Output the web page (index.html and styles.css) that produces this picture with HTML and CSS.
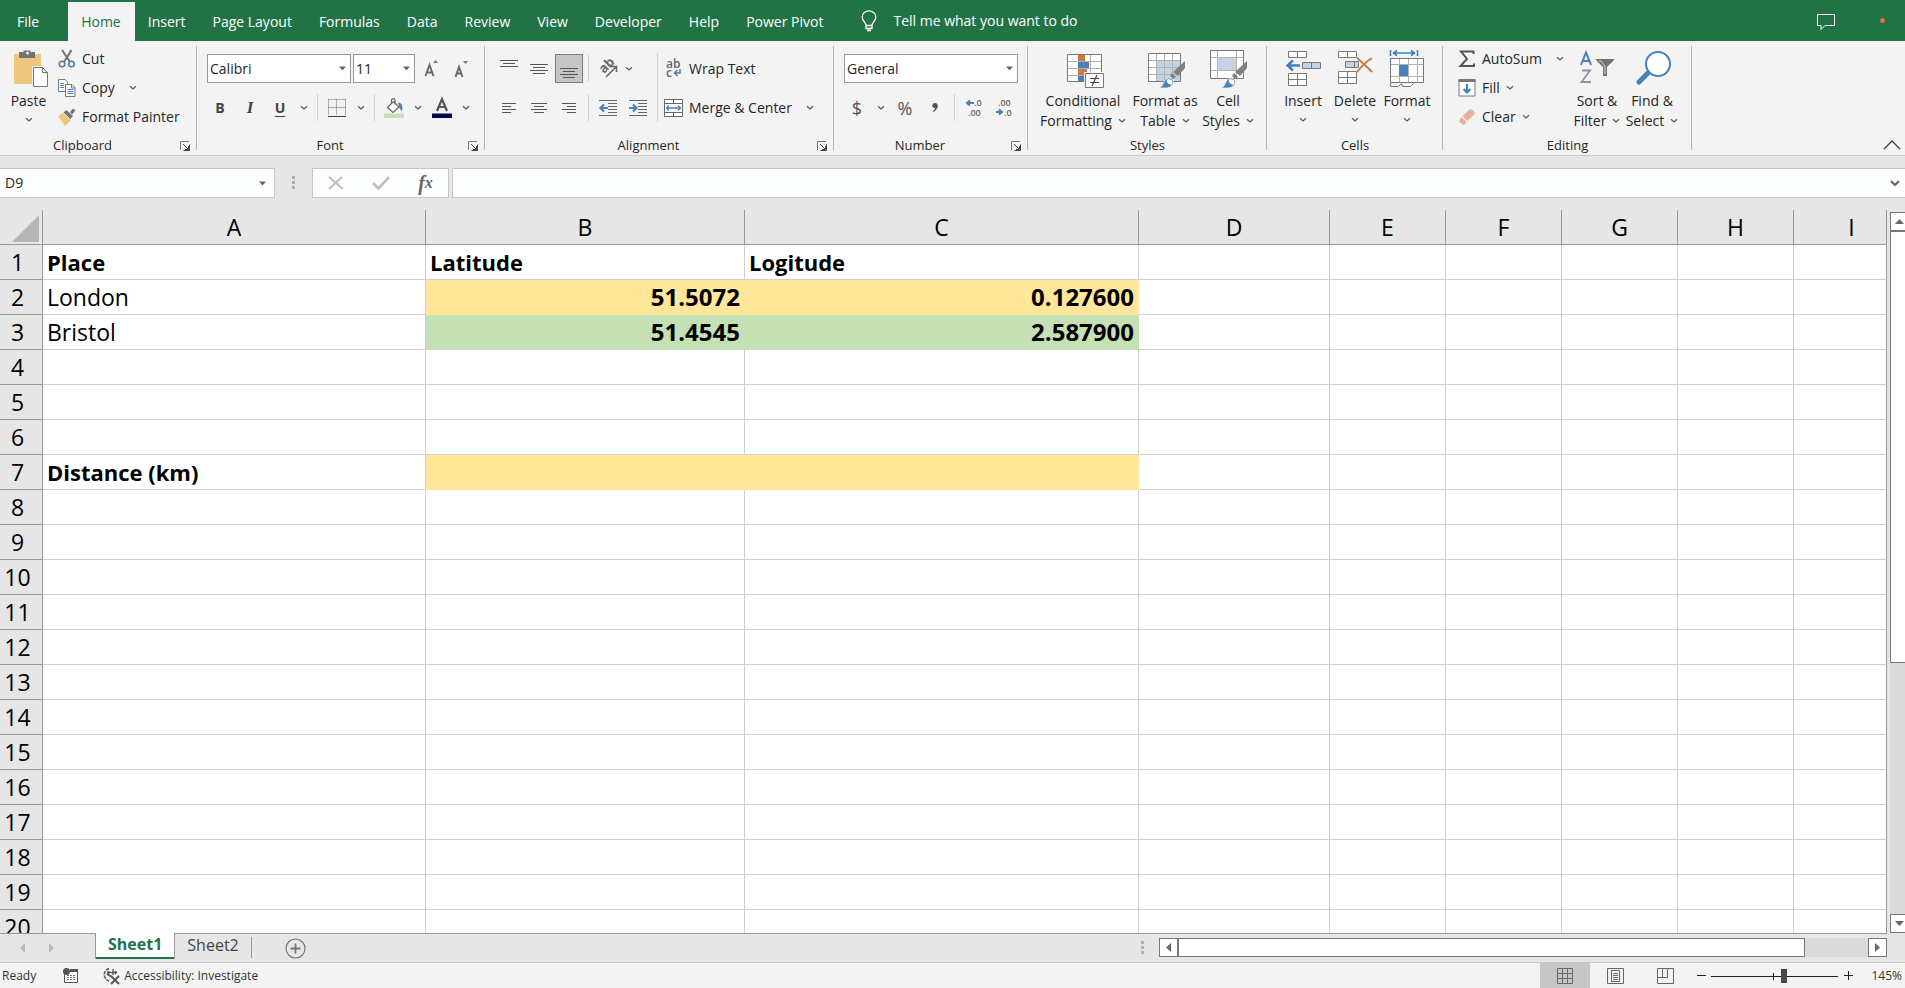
FILE: index.html
```html
<!DOCTYPE html>
<html lang="en">
<head>
<meta charset="utf-8">
<title>Spreadsheet</title>
<link rel="stylesheet" href="styles.css">
</head>
<body>
<svg class="defs" aria-hidden="true">
  <symbol id="chev" viewBox="0 0 8 6"><path d="M1 1.200 4 4 7 1.200" fill="none" stroke="#555" stroke-width="1.200"/></symbol>
  <symbol id="tri" viewBox="0 0 8 5"><path d="M0 .5h7L3.500 4.500z" fill="#666"/></symbol>
  <symbol id="launch" viewBox="0 0 10 10"><path d="M.5 9V.5H9" fill="none" stroke="#777"/><path d="M3 3 8 8M9.500 3.500v6h-6M8.500 5v3.500H5" fill="none" stroke="#444"/></symbol>
  <symbol id="brush" viewBox="0 0 28 28"><path d="M27 0v7l-7 8-5-4z" fill="#7f7f7f"/><path d="m14 12 4 4-3 2-3-3z" fill="#7f7f7f"/><path d="M1 27c5-1 4-10 10-10 5 0 6 6 1 9-3 1.500-7 1-11 1z" fill="#4681b8" stroke="#f3f3f3" stroke-width=".8"/><path d="M10 18c4 0 6 3 3 6-1-1-3-1-4-3-.6-1 0-2.500 1-3z" fill="#fff"/></symbol>
</svg>

<nav class="tabs">
  <button class="tab file">File</button>
  <button class="tab active">Home</button>
  <button class="tab">Insert</button>
  <button class="tab">Page Layout</button>
  <button class="tab">Formulas</button>
  <button class="tab">Data</button>
  <button class="tab">Review</button>
  <button class="tab">View</button>
  <button class="tab">Developer</button>
  <button class="tab">Help</button>
  <button class="tab">Power Pivot</button>
  <button class="tell">
    <svg width="16" height="22" viewBox="0 0 16 22" fill="none" stroke="#fff" stroke-width="1.3"><path d="M5 15.500c0-3-3.800-4.500-3.800-8.500a6.800 6.200 0 0 1 13.600 0c0 4-3.800 5.500-3.800 8.500zM5 15.500v3h6v-3M6 20.500h4"/></svg>
    <span>Tell me what you want to do</span>
  </button>
  <button class="comment" aria-label="Comments"><svg width="18" height="18" viewBox="0 0 18 18"><path d="M.5 1.500h17v11H8l-4 4v-4H.5z" fill="none" stroke="#fff"/></svg></button>
  <span class="dot"></span>
</nav>

<section class="ribbon">
  <div class="group clipboard">
    <div class="content">
      <button class="big paste">
        <svg width="40" height="40" viewBox="-4 0 40 40"><path d="M1 5h27v30H1z" fill="#ecc77d"/><path d="M6 3h4.500V1.500h7V3H22v6H6z" fill="#737373"/><circle cx="14.500" cy="4" r="1.500" fill="#f3f3f3"/><path d="M19 17h11l6 6v17H19z" fill="#f3f3f3"/><path d="M20.500 18.500h9l5 5v14h-14zM29.500 18.500v5h5" fill="#fff" stroke="#777"/></svg>
        <span>Paste</span><svg class="chev"><use href="#chev"/></svg>
      </button>
      <div class="stack">
        <button class="small"><svg width="18" height="18" viewBox="0 0 18 18" fill="none"><path d="m4 0 8 12M13.500 0 6 12" stroke="#737373" stroke-width="2"/><circle cx="4" cy="14" r="2.800" stroke="#4681b8" stroke-width="1.500"/><circle cx="13.500" cy="14" r="2.800" stroke="#4681b8" stroke-width="1.500"/></svg><span>Cut</span></button>
        <button class="small"><svg width="18" height="18" viewBox="0 0 18 18" fill="#fff" stroke="#777"><path d="M.5.500H7l2.500 2.500v9.500h-9z"/><path d="M2 4.500h4M2 6.500h4M2 8.500h4" stroke="#4681b8"/><path d="M7.500 5.500H14l3 3v9H7.500zM13.500 5.500v3.500H17"/><path d="M9.500 10.500h6M9.500 12.500h6M9.500 14.500h6" stroke="#4681b8"/></svg><span>Copy</span><svg class="chev far"><use href="#chev"/></svg></button>
        <button class="small"><svg width="18" height="18" viewBox="0 0 18 18"><path d="m0 8 5-3 8 7-6 6z" fill="#ecc77d"/><path d="m5.500 4.500 3-2.500 6.500 6-2.500 3z" fill="#737373"/><path d="m12 4 3-3.500 2.500 2L14 6.500z" fill="#737373"/></svg><span>Format Painter</span></button>
      </div>
    </div>
    <div class="caption"><span>Clipboard</span><button aria-label="Clipboard settings"><svg width="10" height="10"><use href="#launch"/></svg></button></div>
  </div>

  <div class="group font">
    <div class="content rows">
      <div class="row">
        <div class="pick face"><select aria-label="Font"><option>Calibri</option></select><svg class="tri"><use href="#tri"/></svg></div>
        <div class="pick size"><select aria-label="Font size"><option>11</option></select><svg class="tri"><use href="#tri"/></svg></div>
        <button class="tool lead" aria-label="Increase font size"><svg width="15" height="18" viewBox="0 0 15 18"><path d="m1.500 16 4-11 4 11M3 12.500h5.500" fill="none" stroke="#666" stroke-width="1.900"/><path d="m9 3 2.500-3L14 3z" fill="#4681b8"/></svg></button>
        <button class="tool" aria-label="Decrease font size"><svg width="15" height="18" viewBox="0 0 15 18"><path d="m1.500 17 3.500-10 3.500 10M3 13.500h4.500" fill="none" stroke="#666" stroke-width="1.900"/><path d="m9 1 2.500 3L14 1z" fill="#4681b8"/></svg></button>
      </div>
      <div class="row">
        <button class="tool strong">B</button><button class="tool slant">I</button><button class="tool under">U</button>
        <button class="drop" aria-label="Underline styles"><svg class="chev"><use href="#chev"/></svg></button>
        <span class="sep"></span>
        <button class="tool" aria-label="Borders"><svg width="18" height="18" viewBox="0 0 18 18" fill="none" stroke="#666"><path d="M.5.500v16M17.500.500v16M8.500.500v16M.5.500h17M.5 8.500h17" stroke-dasharray="1 1"/><path d="M0 17.500h18" stroke="#444"/></svg></button>
        <button class="drop" aria-label="Border styles"><svg class="chev"><use href="#chev"/></svg></button>
        <span class="sep"></span>
        <button class="tool" aria-label="Fill color"><svg width="20" height="22" viewBox="0 0 20 22"><path d="M0 16.500h20v4.500H0z" fill="#c5e0b4"/><path d="m3.500 10.500 6-6 5.500 5.500-6 5.500z" fill="#fff" stroke="#666" stroke-width="1.200"/><path d="M7.500 7V3.500c0-2.500 3.500-2.500 3.500 0v4" fill="none" stroke="#666" stroke-width="1.200"/><path d="M14 5.500c4 0 5 4 4 9l-2.500-3.500z" fill="#4681b8"/></svg></button>
        <button class="drop" aria-label="Fill colors"><svg class="chev"><use href="#chev"/></svg></button>
        <button class="tool" aria-label="Font color"><svg width="20" height="22" viewBox="0 0 20 22"><path d="M0 16.500h20v4.500H0z" fill="#000b4f"/><path d="m5 14 5-12 5 12M7 10h6" fill="none" stroke="#555" stroke-width="2.200"/></svg></button>
        <button class="drop" aria-label="Font colors"><svg class="chev"><use href="#chev"/></svg></button>
      </div>
    </div>
    <div class="caption"><span>Font</span><button aria-label="Font settings"><svg width="10" height="10"><use href="#launch"/></svg></button></div>
  </div>

  <div class="group align">
    <div class="content">
      <div class="rows">
        <div class="row">
          <button class="tool" aria-label="Top align"><svg width="18" height="18" viewBox="0 0 18 18" stroke="#555"><path d="M0 .5h18M3 3.500h12M0 6.500h18"/></svg></button>
          <button class="tool" aria-label="Middle align"><svg width="18" height="18" viewBox="0 0 18 18" stroke="#555"><path d="M0 4.500h18M3 7.500h12M0 10.500h18M3 13.500h12"/></svg></button>
          <button class="tool on" aria-label="Bottom align"><svg width="18" height="18" viewBox="0 0 18 18" stroke="#555"><path d="M0 8.500h18M3 11.500h12M0 14.500h18M3 17.500h12"/></svg></button>
          <span class="sep"></span>
          <button class="tool" aria-label="Orientation"><svg width="20" height="18" viewBox="0 0 20 18"><text class="glyph" transform="translate(6 14) rotate(-45)">ab</text><path d="M8 17 18 7M13 6.500h5.500V12" fill="none" stroke="#666" stroke-width="1.500"/></svg></button>
          <button class="drop tight" aria-label="Orientation options"><svg class="chev"><use href="#chev"/></svg></button>
        </div>
        <div class="row">
          <button class="tool" aria-label="Align left"><svg width="16" height="12" viewBox="0 0 16 12" stroke="#555"><path d="M1 1.500h14M1 4.500h9M1 7.500h14M1 10.500h9"/></svg></button>
          <button class="tool" aria-label="Center"><svg width="16" height="12" viewBox="0 0 16 12" stroke="#555"><path d="M0 1.500h16M3 4.500h10M0 7.500h16M3 10.500h10"/></svg></button>
          <button class="tool" aria-label="Align right"><svg width="16" height="12" viewBox="0 0 16 12" stroke="#555"><path d="M1 1.500h14M6 4.500h9M1 7.500h14M6 10.500h9"/></svg></button>
          <span class="sep"></span>
          <button class="tool" aria-label="Decrease indent"><svg width="18" height="16" viewBox="0 0 18 16"><path d="M0 .5h18M9 3.500h9M9 6.500h9M9 9.500h9M9 12.500h9M0 15.500h18" stroke="#666"/><path d="M9 8H2M5 4.500 1.500 8 5 11.500" fill="none" stroke="#4681b8" stroke-width="2.200"/></svg></button>
          <button class="tool" aria-label="Increase indent"><svg width="18" height="16" viewBox="0 0 18 16"><path d="M0 .5h18M9 3.500h9M9 6.500h9M9 9.500h9M9 12.500h9M0 15.500h18" stroke="#666"/><path d="M0 8h7M4 4.500 7.500 8 4 11.500" fill="none" stroke="#4681b8" stroke-width="2.200"/></svg></button>
        </div>
      </div>
      <span class="sep tall"></span>
      <div class="rows">
        <button class="small row"><svg width="20" height="20" viewBox="0 0 20 20"><text x="3" y="9" class="glyph sm">ab</text><text x="3" y="18" class="glyph sm">c</text><path d="M17 10v4h-5M14.500 11l-3 3 3 3" fill="none" stroke="#4681b8" stroke-width="1.500"/></svg><span>Wrap Text</span></button>
        <button class="small row"><svg width="20" height="20" viewBox="0 0 20 20"><path d="M1.500 1.500h18v17h-18zM1.500 5.500h18M1.500 14.500h18M10.500 1.500v4M10.500 14.500v4" fill="#fff" stroke="#666"/><path d="M4 10h13M6 7.500 3.500 10 6 12.500M15 7.500l2.500 2.500-2.500 2.500" fill="none" stroke="#4681b8" stroke-width="1.400"/></svg><span>Merge &amp; Center</span><svg class="chev far"><use href="#chev"/></svg></button>
      </div>
    </div>
    <div class="caption"><span>Alignment</span><button aria-label="Alignment settings"><svg width="10" height="10"><use href="#launch"/></svg></button></div>
  </div>

  <div class="group number">
    <div class="content rows">
      <div class="row"><div class="pick format"><select aria-label="Number format"><option>General</option></select><svg class="tri"><use href="#tri"/></svg></div></div>
      <div class="row">
        <button class="tool sign">$</button>
        <button class="drop" aria-label="Currencies"><svg class="chev"><use href="#chev"/></svg></button>
        <button class="tool sign">%</button>
        <button class="tool" aria-label="Comma style"><svg width="8" height="12" viewBox="0 0 8 12"><path d="M4 1c4 0 4 6-1.500 9l-.8-.8C3.500 8 4 7 3.800 6 .5 6 .5 1 4 1z" fill="#555"/></svg></button>
        <span class="sep"></span>
        <button class="tool" aria-label="Increase decimal"><svg width="18" height="20" viewBox="0 0 18 20"><text x="9" y="8" class="glyph xs">.0</text><text x="3" y="18" class="glyph xs">.00</text><path d="M9 5H3M5 2.500 2 5l3 2.500" fill="none" stroke="#4681b8" stroke-width="2"/></svg></button>
        <button class="tool" aria-label="Decrease decimal"><svg width="18" height="20" viewBox="0 0 18 20"><text x="3" y="8" class="glyph xs">.00</text><text x="9" y="18" class="glyph xs">.0</text><path d="M1 14h6M4 11.500 7 14l-3 2.500" fill="none" stroke="#4681b8" stroke-width="2"/></svg></button>
      </div>
    </div>
    <div class="caption"><span>Number</span><button aria-label="Number settings"><svg width="10" height="10"><use href="#launch"/></svg></button></div>
  </div>

  <div class="group styles">
    <div class="content">
      <button class="big cf">
        <svg width="44" height="40" viewBox="-6 0 44 40"><path d="M.5 5.500h34v27H.5z" fill="#fff"/><path d="M11.500 5v28M23.500 5v28M.5 12.500h34M.5 19.500h34M.5 26.500h34" stroke="#b0b0b0"/><path d="M.5 5.500h34v27H.5z" fill="none" stroke="#777"/><path d="M11 6h7v6h-7zM11 20h9v6h-9z" fill="#c67b40"/><path d="M11 13h11v6H11zM11 27h6v5h-6z" fill="#4681b8"/><path d="M17 23h21v16H17z" fill="#f3f3f3"/><path d="M18.500 24.500h18v14h-18z" fill="#fff" stroke="#777"/><path d="M23 29.500h9M23 33.500h9M30 26l-5 11" fill="none" stroke="#444" stroke-width="1.200"/></svg>
        <span>Conditional</span><span>Formatting <svg class="chev"><use href="#chev"/></svg></span>
      </button>
      <button class="big ft">
        <svg width="42" height="40" viewBox="-4 0 42 40"><path d="M.5 4.500h32v28H.5z" fill="#fff"/><path d="M9 12h23v20H9z" fill="#c2d3e6"/><path d="M8.500 5v27M16.500 5v27M24.500 5v27M.5 11.500h32M.5 18.500h32M.5 25.500h32" stroke="#b0b0b0"/><path d="M.5 4.500h32v28H.5z" fill="none" stroke="#777"/><use href="#brush" x="10" y="12" width="28" height="28"/></svg>
        <span>Format as</span><span>Table <svg class="chev"><use href="#chev"/></svg></span>
      </button>
      <button class="big cs">
        <svg width="40" height="40" viewBox="-2 0 40 40"><path d="M.5 1.500h33v28H.5z" fill="#fff"/><path d="M7.500 2v27M26.500 2v27M.5 8.500h33M.5 21.500h33" stroke="#b0b0b0"/><path d="M8 9h18v12H8z" fill="#c2d3e6"/><path d="M.5 1.500h33v28H.5z" fill="none" stroke="#777"/><use href="#brush" x="10" y="12" width="28" height="28"/></svg>
        <span>Cell</span><span>Styles <svg class="chev"><use href="#chev"/></svg></span>
      </button>
    </div>
    <div class="caption"><span>Styles</span></div>
  </div>

  <div class="group cells">
    <div class="content">
      <button class="big cell">
        <svg width="36" height="40" viewBox="0 0 36 40"><path d="M3.500 2.500h18v6h-18zM12.500 2.500v6M3.500 24.500h18v12h-18zM12.500 24.500v12M3.500 30.500h18" fill="#fff" stroke="#777"/><path d="M17.500 13.500h18v6h-18zM26.500 13.500v6" fill="#c2d3e6" stroke="#777"/><path d="M15 16.500H3M8 11.500l-5.500 5 5.500 5" fill="none" stroke="#4681b8" stroke-width="2.400"/></svg>
        <span>Insert</span><svg class="chev"><use href="#chev"/></svg>
      </button>
      <button class="big cell">
        <svg width="36" height="40" viewBox="0 0 36 40"><path d="M1.500 2.500h18v6h-18zM10.500 2.500v6M1.500 22.500h18v12h-18zM10.500 22.500v12M1.500 28.500h18" fill="#fff" stroke="#777"/><path d="M8.500 12.500h13v6h-13zM17.500 12.500v6" fill="#c2d3e6" stroke="#777"/><path d="M20 9c4 3 10 9 15 14M35 9c-5 3-11 9-15 14" fill="none" stroke="#c67b40" stroke-width="2"/></svg>
        <span>Delete</span><svg class="chev"><use href="#chev"/></svg>
      </button>
      <button class="big cell">
        <svg width="36" height="40" viewBox="0 0 36 40"><path d="M1.500 1v6M28.500 1v6M5 4h20M8 1.500 4.500 4 8 6.500M22 1.500 25.500 4 22 6.500" fill="none" stroke="#4681b8" stroke-width="1.600"/><path d="M1.500 9.500h33v24h-33z" fill="#fff"/><path d="M10.500 9v24M19.500 9v24M28.500 9v24M1.500 15.500h33M1.500 27.500h33" stroke="#b0b0b0"/><path d="M1.500 9.500h33v24h-33zM1.500 33.500v4h8l3-3 1 3h8l3-3" fill="none" stroke="#777"/><path d="M10 16h9v11h-9z" fill="#4681b8"/></svg>
        <span>Format</span><svg class="chev"><use href="#chev"/></svg>
      </button>
    </div>
    <div class="caption"><span>Cells</span></div>
  </div>

  <div class="group editing">
    <div class="content">
      <div class="stack">
        <button class="small"><svg width="18" height="18" viewBox="0 0 18 18"><path d="M15.500 4V1.500H3L9 9l-6.500 7H16v-2.500" fill="none" stroke="#555" stroke-width="2"/></svg><span>AutoSum</span><svg class="chev far"><use href="#chev"/></svg></button>
        <button class="small"><svg width="18" height="18" viewBox="0 0 18 18"><path d="M1 1h16v16H1z" fill="#fff" stroke="#777"/><path d="M.5 0h17v3H.5z" fill="#777"/><path d="M9 5v8M5.500 10 9 13.500l3.500-3.500" fill="none" stroke="#4681b8" stroke-width="2.200"/></svg><span>Fill</span><svg class="chev"><use href="#chev"/></svg></button>
        <button class="small"><svg width="18" height="18" viewBox="0 0 18 18"><path d="M11.500 1.500q1-1 2 0l3 2.500q1 1 0 2L9.500 13 4.500 8zM3.500 9l5 5-2 2.500q-1 1-2 0L1.500 14q-1-1 0-2z" fill="#eeae9c"/></svg><span>Clear</span><svg class="chev"><use href="#chev"/></svg></button>
      </div>
      <button class="big sort">
        <svg width="36" height="40" viewBox="0 0 36 40"><path d="m2 16 5-12.500L12 16M4 12h6.500" fill="none" stroke="#4681b8" stroke-width="2"/><path d="M3 21.500h8L2.500 33H12" fill="none" stroke="#9b8aa5" stroke-width="1.800"/><path d="M17 10h18v1l-7 7v9h-4v-9l-7-7z" fill="#737373"/><path d="M20 12h2l4 5v8" fill="none" stroke="#d8d8d8"/></svg>
        <span>Sort &amp;</span><span>Filter <svg class="chev"><use href="#chev"/></svg></span>
      </button>
      <button class="big find">
        <svg width="40" height="40" viewBox="-4 0 40 40"><path d="M12 24 3 33" stroke="#4681b8" stroke-width="5" stroke-linecap="round"/><circle cx="22" cy="15" r="12" fill="#fff" stroke="#4681b8" stroke-width="2"/></svg>
        <span>Find &amp;</span><span>Select <svg class="chev"><use href="#chev"/></svg></span>
      </button>
    </div>
    <div class="caption"><span>Editing</span></div>
  </div>
  <button class="collapse" aria-label="Collapse ribbon"><svg width="18" height="10" viewBox="0 0 18 10"><path d="m1 9 8-8 8 8" fill="none" stroke="#444" stroke-width="1.400"/></svg></button>
</section>

<section class="formula">
  <div class="namebox"><input aria-label="Name box" value="D9"><svg class="tri"><use href="#tri"/></svg></div>
  <span class="grip"></span>
  <div class="edit">
    <button aria-label="Cancel"><svg width="16" height="14" viewBox="0 0 16 14"><path d="m1 1 14 12M14 1 1 13" stroke="#c0c0c0" stroke-width="2.200"/></svg></button>
    <button aria-label="Enter"><svg width="18" height="14" viewBox="0 0 18 14"><path d="m1 7 5.500 5.500L17 1" fill="none" stroke="#c0c0c0" stroke-width="2.600"/></svg></button>
    <button class="fx" aria-label="Insert function">f<small>x</small></button>
  </div>
  <div class="bar"><input aria-label="Formula bar"><svg width="10" height="7" viewBox="0 0 10 7"><path d="m1 1 4 4 4-4" fill="none" stroke="#666" stroke-width="2.200"/></svg></div>
</section>

<main class="sheet">
  <div class="grid">
    <table>
      <colgroup><col class="col-head"><col class="col-a"><col class="col-b"><col class="col-c"><col class="col-d"><col class="col-n"><col class="col-n"><col class="col-n"><col class="col-n"><col class="col-n"></colgroup>
      <thead><tr><th class="corner"><svg width="28" height="28" viewBox="0 0 28 28"><path d="M27 0v27H0z" fill="#b5b5b5"/></svg></th><th>A</th><th>B</th><th>C</th><th>D</th><th>E</th><th>F</th><th>G</th><th>H</th><th>I</th></tr></thead>
      <tbody>
        <tr><th>1</th><td class="bold">Place</td><td class="bold">Latitude</td><td class="bold">Logitude</td><td></td><td></td><td></td><td></td><td></td><td></td></tr>
        <tr><th>2</th><td>London</td><td class="num gold">51.5072</td><td class="num gold">0.127600</td><td></td><td></td><td></td><td></td><td></td><td></td></tr>
        <tr><th>3</th><td>Bristol</td><td class="num green">51.4545</td><td class="num green">2.587900</td><td></td><td></td><td></td><td></td><td></td><td></td></tr>
        <tr><th>4</th><td></td><td></td><td></td><td></td><td></td><td></td><td></td><td></td><td></td></tr>
        <tr><th>5</th><td></td><td></td><td></td><td></td><td></td><td></td><td></td><td></td><td></td></tr>
        <tr><th>6</th><td></td><td></td><td></td><td></td><td></td><td></td><td></td><td></td><td></td></tr>
        <tr><th>7</th><td class="bold">Distance (km)</td><td class="gold"></td><td class="gold"></td><td></td><td></td><td></td><td></td><td></td><td></td></tr>
        <tr><th>8</th><td></td><td></td><td></td><td></td><td></td><td></td><td></td><td></td><td></td></tr>
        <tr><th>9</th><td></td><td></td><td></td><td></td><td></td><td></td><td></td><td></td><td></td></tr>
        <tr><th>10</th><td></td><td></td><td></td><td></td><td></td><td></td><td></td><td></td><td></td></tr>
        <tr><th>11</th><td></td><td></td><td></td><td></td><td></td><td></td><td></td><td></td><td></td></tr>
        <tr><th>12</th><td></td><td></td><td></td><td></td><td></td><td></td><td></td><td></td><td></td></tr>
        <tr><th>13</th><td></td><td></td><td></td><td></td><td></td><td></td><td></td><td></td><td></td></tr>
        <tr><th>14</th><td></td><td></td><td></td><td></td><td></td><td></td><td></td><td></td><td></td></tr>
        <tr><th>15</th><td></td><td></td><td></td><td></td><td></td><td></td><td></td><td></td><td></td></tr>
        <tr><th>16</th><td></td><td></td><td></td><td></td><td></td><td></td><td></td><td></td><td></td></tr>
        <tr><th>17</th><td></td><td></td><td></td><td></td><td></td><td></td><td></td><td></td><td></td></tr>
        <tr><th>18</th><td></td><td></td><td></td><td></td><td></td><td></td><td></td><td></td><td></td></tr>
        <tr><th>19</th><td></td><td></td><td></td><td></td><td></td><td></td><td></td><td></td><td></td></tr>
        <tr><th>20</th><td></td><td></td><td></td><td></td><td></td><td></td><td></td><td></td><td></td></tr>
      </tbody>
    </table>
  </div>
  <div class="vscroll">
    <button aria-label="Scroll up"><svg width="9" height="5" viewBox="0 0 9 5"><path d="M0 5h9L4.500 0z" fill="#666"/></svg></button>
    <span class="thumb"></span><span class="track"></span>
    <button aria-label="Scroll down"><svg width="9" height="5" viewBox="0 0 9 5"><path d="M0 0h9L4.500 5z" fill="#666"/></svg></button>
  </div>
</main>

<section class="sheets">
  <div class="left">
    <button class="nav" aria-label="Previous sheet"><svg width="5" height="10" viewBox="0 0 5 10"><path d="M5 0v10L0 5z" fill="#b9b9b9"/></svg></button>
    <button class="nav" aria-label="Next sheet"><svg width="5" height="10" viewBox="0 0 5 10"><path d="M0 0v10l5-5z" fill="#b9b9b9"/></svg></button>
  </div>
  <button class="stab current">Sheet1</button>
  <div class="rest">
    <button class="stab">Sheet2</button><span class="line"></span>
    <button class="add" aria-label="New sheet"><svg width="21" height="21" viewBox="0 0 21 21" fill="none" stroke="#777"><circle cx="10.500" cy="10.500" r="9.500" stroke-width="1.200"/><path d="M10.500 5.500v10M5.500 10.500h10" stroke-width="1.800"/></svg></button>
    <span class="grip"></span>
    <div class="hscroll">
      <button aria-label="Scroll left"><svg width="5" height="9" viewBox="0 0 5 9"><path d="M5 0v9L0 4.500z" fill="#666"/></svg></button>
      <span class="thumb"></span><span class="track"></span>
      <button aria-label="Scroll right"><svg width="5" height="9" viewBox="0 0 5 9"><path d="M0 0v9l5-4.500z" fill="#666"/></svg></button>
    </div>
  </div>
</section>

<footer class="status">
  <span class="ready">Ready</span>
  <button class="macro" aria-label="Record macro"><svg width="16" height="15" viewBox="0 0 16 15"><path d="M1.500 3.500h13v11h-13z" fill="#fff" stroke="#555"/><path d="M7 1h8v3H7z" fill="#555"/><circle cx="3.500" cy="3.500" r="3.500" fill="#555"/><path d="M4 7.500h9M4 9.500h9M4 11.500h9" stroke="#777" stroke-dasharray="2 1"/></svg></button>
  <button class="access"><svg width="20" height="18" viewBox="0 0 20 18" fill="none" stroke="#555"><path d="M8 1.500A6.500 6.500 0 0 0 8 14" stroke-width="1.500" stroke-dasharray="3.500 1"/><path d="M6 5.500h9M8 4l-1.500 1.500L8 7M12 2v6M14 4l1.500 1.500L14 7" stroke-width="1.300"/><path d="m10 9 8 8M18 9l-8 8M6 7l5 3" stroke-width="1.900"/></svg><span>Accessibility: Investigate</span></button>
  <div class="views">
    <button class="on" aria-label="Normal view"><svg width="16" height="16" viewBox="0 0 16 16" fill="none" stroke="#666"><path d="M.5.500h15v15H.5zM5.500.500v15M10.500.500v15M.5 5.500h15M.5 10.500h15"/></svg></button>
    <button aria-label="Page layout view"><svg width="17" height="16" viewBox="0 0 17 16" fill="none" stroke="#666"><path d="M.5.500h16v15H.5zM4.500 2.500h8v11h-8zM6 5.500h5M6 7.500h5M6 9.500h5M6 11.500h5"/></svg></button>
    <button aria-label="Page break view"><svg width="17" height="16" viewBox="0 0 17 16" fill="none" stroke="#666"><path d="M.5.500h16v15H.5zM.5 9.500h10v-9M5.500.500v9"/></svg></button>
  </div>
  <button class="step" aria-label="Zoom out"><svg width="11" height="11" viewBox="0 0 11 11"><path d="M1 5.500h9" stroke="#222"/></svg></button>
  <input class="zoom" type="range" min="0" max="100" value="58" aria-label="Zoom">
  <button class="step" aria-label="Zoom in"><svg width="11" height="11" viewBox="0 0 11 11"><path d="M1 5.500h9M5.500 1v9" stroke="#222"/></svg></button>
  <span class="percent">145%</span>
</footer>
</body>
</html>
```
FILE: styles.css
```css
* { box-sizing: border-box; }
body {
  margin: 0;
  height: 100vh;
  display: flex;
  flex-direction: column;
  overflow: hidden;
  background: #e6e6e6;
  color: #262626;
  font: 14px/20px "Open Sans", "Noto Sans", sans-serif;
}
button, input, select { font: inherit; color: inherit; border: 0; padding: 0; margin: 0; background: none; border-radius: 0; }
input, select { outline: 0; min-width: 0; }
button { display: flex; align-items: center; justify-content: center; white-space: nowrap; }
svg { flex: none; display: block; overflow: visible; }
.defs { position: absolute; width: 0; height: 0; }
.chev { width: 8px; height: 6px; }
.tri { width: 8px; height: 5px; }
.glyph { font: 700 13px "Open Sans", sans-serif; fill: #666; }
.glyph.sm { font-size: 12px; font-weight: 600; }
.glyph.xs { font-size: 9px; font-weight: 600; }

/* Menu tabs */
.tabs { display: flex; flex: none; height: 41px; padding-top: 2px; background: #217346; color: #fff; }
.tab { padding: 0 14px 0 13px; }
.tab.file { padding: 0 29px 0 17px; }
.tab.active { background: #f3f3f3; color: #217346; }
.tell { gap: 16px; margin-left: 24px; padding-bottom: 1px; }
.comment { margin-left: auto; margin-right: 45px; }
.dot { width: 5px; height: 5px; margin: 16px 20px 0 0; border-radius: 50%; background: #d9782d; }

/* Ribbon */
.ribbon { display: flex; flex: none; height: 115px; background: #f3f3f3; border-bottom: 1px solid #cbcbcb; }
.group { position: relative; display: flex; flex-direction: column; flex: none; padding-top: 3px; }
.group::after { content: ""; position: absolute; right: 0; top: 5px; bottom: 5px; width: 1px; background: #b5b5b5; }
.content { display: flex; flex: 1; }
.caption { display: flex; height: 19px; font-size: 13px; line-height: 18px; }
.caption span { flex: 1; text-align: center; }
.caption button { width: 20px; margin-right: 2px; }
.clipboard { width: 197px; }
.clipboard .caption button { width: 30px; padding-left: 10px; }
.font { width: 288px; }
.align { width: 349px; }
.number { width: 194px; }
.styles { width: 239px; }
.cells { width: 176px; }
.editing { width: 249px; }
.rows { display: flex; flex-direction: column; gap: 10px; padding-top: 10px; }
.row { display: flex; height: 29px; align-items: center; }
.font .rows, .number .rows { padding-left: 8px; }
.font .content, .number .content { padding-left: 8px; }
.align .content { padding-left: 9px; }
.big { flex-direction: column; justify-content: flex-start; }
.big > svg:first-child { margin: 5px 0 2px; }
.big > span { display: flex; align-items: center; gap: 6px; }
.big > .chev { margin-top: 6px; }
.paste { width: 57px; }
.styles .content { padding-left: 8px; }
.cf { width: 94px; }
.ft { width: 70px; }
.cs { width: 56px; }
.cells .content { padding-left: 10px; }
.cell { width: 52px; }
.stack { display: flex; flex-direction: column; }
.small { justify-content: flex-start; gap: 6px; }
.stack .small { height: 29px; }
.small .far { margin-left: 8px; }
.clipboard .stack { padding-left: 1px; }
.editing .content { padding-left: 15px; }
.editing .stack { width: 111px; }
.sort { width: 56px; }
.find { width: 54px; }
.tool { width: 30px; height: 29px; }
.tool.lead { margin-left: 1px; }
.tool.on { width: 28px; margin: 0 1px; background: #c6c6c6; border: 1px solid #7d7d7d; }
.tool.strong { font-weight: 700; color: #444; }
.tool.slant { font: italic 700 17px "Liberation Serif", serif; color: #444; }
.tool.under { font-weight: 700; text-decoration: underline; text-underline-offset: 3px; color: #444; }
.tool.sign { font-size: 18px; color: #555; }
.drop { width: 18px; height: 29px; }
.drop.tight { width: 12px; }
.sep { width: 1px; height: 27px; margin: 0 4px; background: #d0d0d0; }
.sep.tall { height: 69px; margin: 9px 5px 0 4px; }
.pick { display: flex; align-items: center; height: 29px; padding-right: 3px; background: #fff; border: 1px solid #999; }
.pick select { flex: 1; height: 27px; padding-left: 2px; appearance: none; }
.face { width: 144px; margin-left: 2px; }
.size { width: 62px; margin-left: 2px; }
.format { width: 174px; margin-left: 2px; }
.collapse { margin-left: auto; align-self: flex-end; padding: 0 4px 5px; }

/* Formula bar */
.formula { display: flex; flex: none; height: 54px; padding: 12px 0; }
.namebox, .edit, .bar { display: flex; align-items: center; background: #fdfefe; border: 1px solid #c6c6c6; }
.namebox { width: 275px; padding-right: 7px; border-left: 0; }
.namebox input { flex: 1; padding-left: 5px; }
.grip { width: 3px; height: 13px; background: repeating-linear-gradient(#b0b0b0 0 3px, transparent 3px 5px); }
.formula .grip { margin: 8px 17px 0; }
.edit { width: 137px; }
.edit button { flex: 1; }
.fx { font: italic 700 20px "Liberation Serif", serif; color: #666; }
.fx small { font-size: 16px; }
.bar { flex: 1; margin-left: 3px; padding-right: 5px; border-right: 0; }
.bar input { flex: 1; }

/* Grid */
.sheet { display: flex; flex: 1; min-height: 0; }
.grid { flex: 1; min-width: 0; overflow: hidden; border-right: 1px solid #999; }
.grid table { width: 1910px; table-layout: fixed; border-collapse: separate; border-spacing: 0; color: #000; font-size: 23px; line-height: 34px; }
.col-head { width: 43px; }
.col-a { width: 383px; }
.col-b { width: 319px; }
.col-c { width: 394px; }
.col-d { width: 191px; }
.col-n { width: 116px; }
th, td { height: 35px; padding: 0 4px; border: 0 solid #d0d0d0; border-width: 0 1px 1px 0; overflow: hidden; white-space: nowrap; }
th { padding: 0; font-weight: 400; background: #e6e6e6; border-color: #999; }
tbody th { padding-right: 7px; }
.corner svg { margin: 3px 0 0 12px; }
td { background: #fff; }
.bold, .num { font-weight: 700; }
.bold { font-size: 22px; }
.num { font-size: 24px; text-align: right; }
.gold { background: #ffe699; border-color: #ffe699; }
.green { background: #c5e0b4; border-color: #c5e0b4; }
.vscroll { display: flex; flex-direction: column; width: 18px; padding: 2px 0 0 3px; overflow: hidden; }
.vscroll button { width: 19px; height: 19px; background: #fff; border: 1px solid #777; }
.vscroll .thumb { width: 19px; flex: 432; background: #fff; border: 1px solid #777; }
.vscroll .track { flex: 252; background: #dadada; }

/* Sheet tabs */
.sheets { display: flex; flex: none; height: 30px; border-bottom: 1px solid #c6c6c6; }
.left { display: flex; width: 95px; padding-left: 8px; border-top: 1px solid #999; }
.nav { width: 29px; }
.stab { height: 25px; padding: 0 12px 4px; font-size: 16px; color: #444; }
.stab.current { height: 26px; background: #fff; border: solid #999; border-width: 0 1px 0; box-shadow: inset 0 -2px #217346; font-weight: 700; color: #217346; }
.rest { display: flex; flex: 1; margin-right: 18px; border-top: 1px solid #999; }
.line { width: 1px; height: 21px; margin-top: 3px; background: #999; }
.add { margin: 0 auto 0 33px; }
.rest .grip { margin: 7px 15px 0 0; }
.hscroll { display: flex; width: 728px; height: 19px; margin-top: 4px; background: #dadada; }
.hscroll button { width: 19px; background: #fff; border: 1px solid #777; }
.hscroll .thumb { flex: 627; background: #fff; border: 1px solid #777; }
.hscroll .track { flex: 63; }

/* Status bar */
.status { display: flex; flex: none; height: 25px; align-items: center; padding: 0 3px 0 2px; background: #f3f3f3; font-size: 12px; color: #333; }
.macro { margin-left: 27px; }
.access { gap: 3px; margin-left: 22px; }
.views { display: flex; align-self: stretch; margin: 0 1px 0 auto; }
.views button { width: 50px; }
.views .on { background: #c6c6c6; }
.step { width: 20px; }
.zoom { appearance: none; width: 127px; height: 16px; background: linear-gradient(#222, #222) 0 8px / 100% 1px no-repeat, linear-gradient(#222, #222) 62px 5px / 1px 7px no-repeat; }
.zoom::-webkit-slider-thumb { appearance: none; width: 6px; height: 14px; background: #4f4642; }
.percent { width: 44px; text-align: right; }
```
